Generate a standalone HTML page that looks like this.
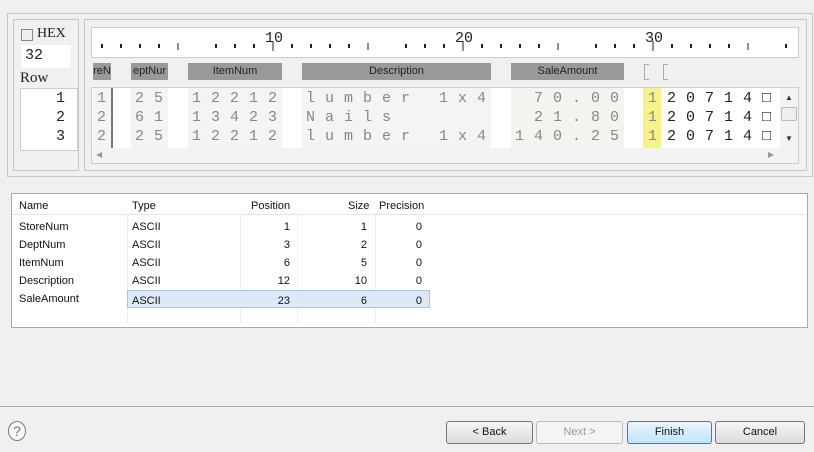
<html><head><style>
body{margin:0;width:814px;height:452px;background:#f0f0f0;font-family:"Liberation Sans",sans-serif;position:relative;overflow:hidden}
.a{position:absolute}
.mono{font-family:"Liberation Mono",monospace;font-size:15px;letter-spacing:10px;white-space:pre;color:#888;line-height:19px}
.hb{position:absolute;top:63px;height:17px;background:#999;color:#222;font-size:11px;line-height:17px;text-align:center;overflow:hidden;white-space:nowrap}
.t{position:absolute;font-size:11px;color:#111;white-space:nowrap}
.btn{position:absolute;top:421px;height:21px;border:1px solid #777;border-radius:3px;background:linear-gradient(#f6f6f6,#dcdcdc);font-size:11px;text-align:center;line-height:21px;color:#111}
</style></head><body>
<div class="a" style="left:7px;top:13px;width:804px;height:162px;border:1px solid #c8c8c8"></div>
<div class="a" style="left:13px;top:19px;width:64px;height:150px;border:1px solid #c8c8c8"></div>
<div class="a" style="left:21px;top:29px;width:10px;height:10px;border:1px solid #888;background:#eee"></div>
<div class="a" style="left:37px;top:26px;font-family:'Liberation Serif',serif;font-size:14px;color:#222">HEX</div>
<div class="a" style="left:21px;top:45px;width:50px;height:23px;background:#fff"></div>
<div class="a" style="left:25px;top:47px;font-family:'Liberation Mono',monospace;font-size:15px;color:#222">32</div>
<div class="a" style="left:20px;top:70px;font-family:'Liberation Serif',serif;font-size:15px;color:#222">Row</div>
<div class="a" style="left:20px;top:88px;width:56px;height:61px;border:1px solid #ccc;background:#fff"></div>
<div class="a" style="left:20px;top:89px;width:45px;text-align:right;font-family:'Liberation Mono',monospace;font-size:15px;line-height:19px;color:#222">1<br>2<br>3</div>
<div class="a" style="left:84px;top:19px;width:721px;height:150px;border:1px solid #c8c8c8"></div>
<div class="a" style="left:91px;top:27px;width:706px;height:29px;background:#fff;border:1px solid #ccc"></div>
<svg class="a" style="left:0;top:0" width="814" height="60">
<g stroke="#222" stroke-width="2">
<path d="M102 44v4M121 44v4M140 44v4M159 44v4M216 44v4M235 44v4M254 44v4M292 44v4M311 44v4M330 44v4M349 44v4M406 44v4M425 44v4M444 44v4M482 44v4M501 44v4M520 44v4M539 44v4M596 44v4M615 44v4M634 44v4M672 44v4M691 44v4M710 44v4M729 44v4M786 44v4"/>
</g>
<g stroke="#222" stroke-width="1"><path d="M273 41v10M463 41v10M653 41v10M178 43v7M368 43v7M558 43v7M748 43v7"/></g>
<g font-family="Liberation Mono,monospace" font-size="15" fill="#222"><text x="265" y="42">10</text><text x="455" y="42">20</text><text x="645" y="42">30</text></g>
</svg>
<div class="hb" style="left:93px;width:18px">reN</div>
<div class="hb" style="left:131px;width:37px">eptNur</div>
<div class="hb" style="left:188px;width:94px">ItemNum</div>
<div class="hb" style="left:302px;width:189px">Description</div>
<div class="hb" style="left:511px;width:113px">SaleAmount</div>
<div class="a" style="left:644px;top:64px;width:4px;height:14px;border:1px solid #aaa;border-right:none"></div>
<div class="a" style="left:663px;top:64px;width:4px;height:14px;border:1px solid #aaa;border-right:none"></div>
<div class="a" style="left:91px;top:87px;width:706px;height:75px;border:1px solid #ccc;background:#f3f3f3"></div>
<div class="a" style="left:92px;top:88px;width:688px;height:60px;background:#fff"></div>
<div class="a" style="left:93px;top:88px;width:18px;height:60px;background:#f4f4f4;border-right:2px solid #777"></div>
<div class="a" style="left:131px;top:88px;width:37px;height:60px;background:#f4f4f4"></div>
<div class="a" style="left:188px;top:88px;width:94px;height:60px;background:#f4f4f4"></div>
<div class="a" style="left:302px;top:88px;width:189px;height:60px;background:#f4f4f4"></div>
<div class="a" style="left:511px;top:88px;width:113px;height:60px;background:#f5f3ef"></div>
<div class="a" style="left:643px;top:88px;width:18px;height:60px;background:#f7f38a"></div>
<div class="a mono" style="left:97px;top:89px">1 25 12212 lumber 1x4  70.00 1
2 61 13423 Nails       21.80 1
2 25 12212 lumber 1x4 140.25 1</div>
<div class="a mono" style="left:667px;top:89px;color:#222">20714□
20714□
20714□</div>
<div class="a" style="left:780px;top:88px;width:17px;height:60px;background:#f3f3f3"></div>
<div class="a" style="left:781px;top:107px;width:14px;height:12px;border:1px solid #bbb;background:#eee;border-radius:2px"></div>
<div class="a" style="left:785px;top:93px;font-size:8px;color:#333">▲</div>
<div class="a" style="left:785px;top:134px;font-size:8px;color:#333">▼</div>
<div class="a" style="left:96px;top:150px;font-size:8px;color:#999">◀</div>
<div class="a" style="left:768px;top:150px;font-size:8px;color:#999">▶</div>

<div class="a" style="left:11px;top:193px;width:795px;height:133px;border:1px solid #aaa;background:#fff"></div>
<div class="a" style="left:12px;top:214px;width:418px;height:110px;background:linear-gradient(90deg,transparent 115px,#eee 115px,#eee 116px,transparent 116px,transparent 228px,#eee 228px,#eee 229px,transparent 229px,transparent 285px,#eee 285px,#eee 286px,transparent 286px,transparent 363px,#eee 363px,#eee 364px,transparent 364px)"></div>
<div class="a" style="left:12px;top:214px;width:794px;height:1px;background:#e6e6e6"></div>
<div class="a" style="left:127px;top:290px;width:303px;height:18px;background:#dde9f7;border:1px solid #a9c4e3;box-sizing:border-box"></div>
<div class="t" style="left:19px;top:200px">Name</div><div class="t" style="left:132px;top:200px">Type</div>
<div class="t" style="left:251px;top:200px">Position</div><div class="t" style="left:348px;top:200px">Size</div><div class="t" style="left:379px;top:200px">Precision</div>
<div class="t" style="left:19px;top:218px;line-height:18px">StoreNum<br>DeptNum<br>ItemNum<br>Description<br>SaleAmount</div>
<div class="t" style="left:132px;top:218px;line-height:18px">ASCII<br>ASCII<br>ASCII<br>ASCII<br><span style="position:relative;top:2px">ASCII</span></div>
<div class="t" style="left:240px;width:50px;text-align:right;top:218px;line-height:18px">1<br>3<br>6<br>12<br><span style="position:relative;top:2px">23</span></div>
<div class="t" style="left:317px;width:50px;text-align:right;top:218px;line-height:18px">1<br>2<br>5<br>10<br><span style="position:relative;top:2px">6</span></div>
<div class="t" style="left:372px;width:50px;text-align:right;top:218px;line-height:18px">0<br>0<br>0<br>0<br><span style="position:relative;top:2px">0</span></div>

<div class="a" style="left:0;top:406px;width:814px;height:1px;background:#aaa"></div>
<div class="a" style="left:8px;top:421px;width:16px;height:18px;border:1px solid #777;border-radius:50%;text-align:center;font-size:14px;line-height:18px;color:#777;background:#fafafa">?</div>
<div class="btn" style="left:446px;width:85px">&lt; Back</div>
<div class="btn" style="left:536px;width:85px;color:#999;border-color:#bbb;background:#f4f4f4">Next &gt;</div>
<div class="btn" style="left:627px;width:83px;border-color:#3c7fb1;background:linear-gradient(#eaf6fd,#bee6fd)">Finish</div>
<div class="btn" style="left:715px;width:88px">Cancel</div>
</body></html>
